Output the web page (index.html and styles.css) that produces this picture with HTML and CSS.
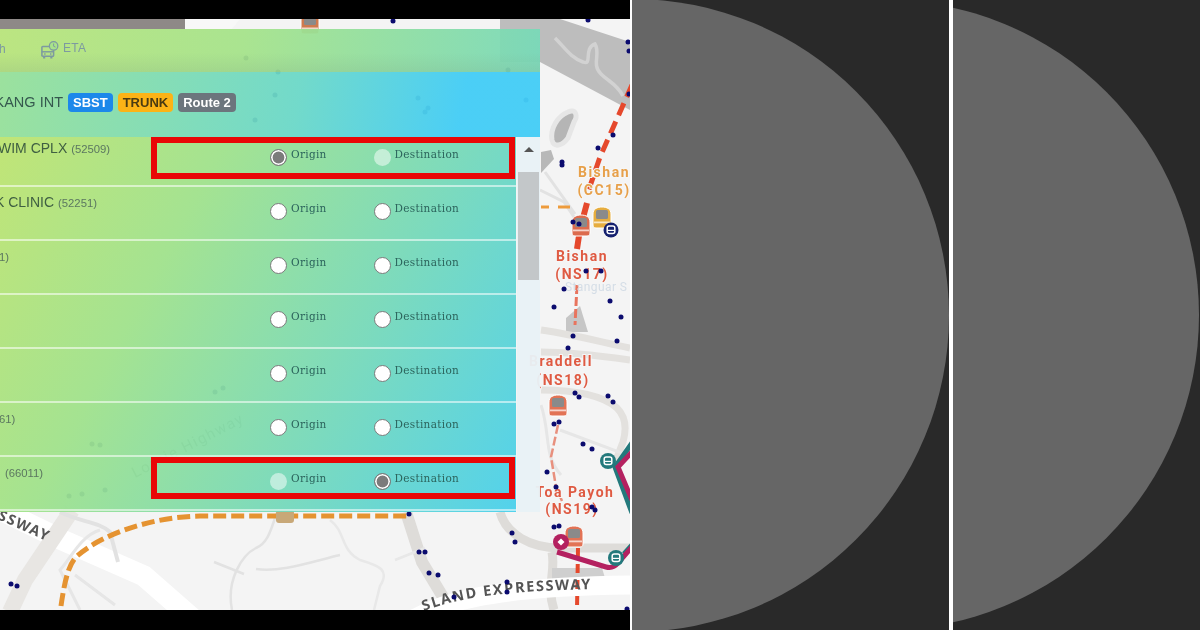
FILE: index.html
```html
<!DOCTYPE html>
<html lang="en">
<head>
<meta charset="utf-8">
<title>Bus route origin and destination</title>
<link rel="stylesheet" href="styles.css">
</head>
<body>
<div class="page">
  <section class="shot">
    <div class="bar-top"></div>
    <div class="map">
      <svg class="map-art" viewBox="0 19 630 591" width="630" height="591" aria-hidden="true">
        <defs>
          <g id="train">
            <path d="M-9 7V-4c0-5 4-7 9-7s9 2 9 7V7c0 2-1 3-3 3H-6c-2 0-3-1-3-3z" fill="currentColor" stroke="#fff" stroke-width="1"/>
            <rect x="-6" y="-8" width="12" height="9" rx="1.5" fill="#8a8a8a"/>
            <rect x="-8" y="3.5" width="16" height="1.8" fill="#fff" opacity=".7"/>
          </g>
          <g id="bus">
            <rect x="-3.8" y="-4" width="7.6" height="7.4" rx="2" fill="none" stroke="#fff" stroke-width="1.5"/>
            <path d="M-3.4 .4H3.4" stroke="#fff" stroke-width="1.2"/>
          </g>
        </defs>

        <rect x="0" y="19" width="185" height="10" fill="#8e8987"/>
        <path d="M185 29l8-6 24 6z" fill="#fff"/>
        <path d="M185 19h55l-8 10h-47z" fill="#f8f8f8"/>
        <path d="M500 19h60l70 23v68l-90-48h-40z" fill="#bdbdbd"/>
        <path d="M555 38c10 10 16 20 28 24 10 4 0-14 12-18 6 10-4 20 6 30 8 8 16 10 22 22" fill="none" stroke="#d2d2d2" stroke-width="3.5"/>
        <path d="M568 112c8-4 10 4 6 10l-6 16c-6 8-14 10-16 2-2-12 6-24 16-28z" fill="#b5b5b5" stroke="#e6e6e6" stroke-width="5"/>
        <path d="M541 152l10-2 3 9-13 14z" fill="#b8b8b8"/>
        <path d="M540 190l24 12 20 30M545 172l30 42" fill="none" stroke="#e2e2e2" stroke-width="3"/>
        <path d="M566 318l14-12 8 26h-22z" fill="#c6c6c6"/>
        <path d="M541 330c30 4 60 12 89 18M541 352c30 0 60 4 89 8" fill="none" stroke="#e3e1de" stroke-width="7"/>
        <path d="M541 390c30 0 60 4 76 18 8 8 10 20 6 34l-10 26" fill="none" stroke="#e3e1de" stroke-width="7"/>
        <path d="M560 430l70 26M541 405c10 30 2 50 20 70" fill="none" stroke="#e6e6e6" stroke-width="3"/>
        <path d="M500 512c6 22 30 36 60 36h70M552 552c4 20-6 34 2 58" fill="none" stroke="#dedcd9" stroke-width="9"/>
        <path d="M552 568l50 0 6 20h-56z" fill="#cfcfcf"/>

        <path d="M-10 505l70 34 84 37 48 42" fill="none" stroke="#fff" stroke-width="21"/>
        <path d="M72 510L25 580 10 612" fill="none" stroke="#e8e6e3" stroke-width="16"/>
        <path d="M60 512c20 10 40 10 50 20l8 30" fill="none" stroke="#e2e2e2" stroke-width="4"/>
        <path d="M100 530c-20 6-30 30-40 40l20 40M75 575l40 30" fill="none" stroke="#e6e6e6" stroke-width="3"/>
        <path d="M232 610c-6-30 10-55 24-62 14-6 16-24 22-38M214 562l30 12M340 555c-26 6-60 18-84 14" fill="none" stroke="#e2e2e2" stroke-width="2.5"/>
        <path d="M406 512l16 50 24 40" fill="none" stroke="#dedcd9" stroke-width="12"/>
        <path d="M330 520c16 12 10 30 30 40 20 6 30 10 20 26l-6 24M395 560l30-12" fill="none" stroke="#e8e8e8" stroke-width="2.5"/>
        <path d="M395 632C430 602 490 586 640 585" fill="none" stroke="#fff" stroke-width="19"/>
        <path id="island" d="M424 611C460 597 510 590 604 589" fill="none"/>

        <path d="M61 606C64 585 68 565 76 557 100 535 150 517 200 516H410" fill="none" stroke="#e59331" stroke-width="5" stroke-dasharray="13 5"/>
        <rect x="276" y="510" width="18" height="13" rx="3" fill="#c8a878"/>

        <path d="M632 85l-32 72-13 38" fill="none" stroke="#e5482c" stroke-width="5" stroke-dasharray="13 7"/>
        <path d="M587 203l-7 26-3 20" fill="none" stroke="#e5482c" stroke-width="6"/>
        <path d="M577 285l-2 40" fill="none" stroke="#e8745e" stroke-width="3" stroke-dasharray="9 3"/>
        <path d="M558 425l-7 32 5 30 6 14" fill="none" stroke="#e8907e" stroke-width="2.5" stroke-dasharray="9 3"/>
        <path d="M578 548l-1 62" fill="none" stroke="#e5482c" stroke-width="4" stroke-dasharray="9 7"/>
        <path d="M541 207h8M558 207h12" stroke="#ed9b3c" stroke-width="3"/>

        <path d="M632 443l-17 24 17 46M632 545l-8 9" fill="none" stroke="#23797c" stroke-width="5"/>
        <path d="M632 452l-14 15 14 33M557 552l49 15q7 2 12-4l14-16" fill="none" stroke="#b42160" stroke-width="5"/>

        <use href="#train" x="581" y="226" color="#dc6b4e"/>
        <use href="#train" x="602" y="218" color="#e6ad3f"/>
        <use href="#train" x="558" y="406" color="#e27355"/>
        <use href="#train" x="574" y="537" color="#e27355"/>
        <use href="#train" x="310" y="24" color="#cf7a4e"/>
        <circle cx="611" cy="230" r="7.5" fill="#15206f"/><use href="#bus" x="611" y="230"/>
        <circle cx="608" cy="461" r="8" fill="#23797c"/><use href="#bus" x="608" y="461"/>
        <circle cx="616" cy="558" r="8" fill="#23797c"/><use href="#bus" x="616" y="558"/>
        <circle cx="561" cy="542" r="8" fill="#b42160"/>
        <path d="M561 538.5l3.5 3.5-3.5 3.5-3.5-3.5z" fill="#fff"/>

        <g class="lbl lbl-orange">
          <text x="604" y="177">Bishan</text>
          <text x="604" y="195">(CC15)</text>
        </g>
        <g class="lbl lbl-red">
          <text x="582" y="261">Bishan</text>
          <text x="582" y="279">(NS17)</text>
          <text x="561" y="366">Braddell</text>
          <text x="563" y="385">(NS18)</text>
          <text x="575" y="497">Toa Payoh</text>
          <text x="572" y="514">(NS19)</text>
        </g>
        <text class="faint-name" x="565" y="291">Stanguar S</text>
        <text class="hwy" transform="translate(-12 515) rotate(24)">ESSWAY</text>
        <text class="hwy"><textPath href="#island" startOffset="0">SLAND EXPRESSWAY</textPath></text>
        <text class="faint-road" transform="translate(135 478) rotate(-27)">Lornie Highway</text>

        <g fill="#0b0b6e">
          <circle cx="393" cy="21" r="2.5"/><circle cx="588" cy="20" r="2.5"/><circle cx="628" cy="42" r="2.5"/><circle cx="629" cy="51" r="2.5"/><circle cx="629" cy="94" r="2.5"/>
          <circle cx="613" cy="135" r="2.5"/><circle cx="598" cy="148" r="2.5"/><circle cx="562" cy="162" r="2.5"/><circle cx="562" cy="165" r="2.5"/><circle cx="573" cy="222" r="2.5"/><circle cx="579" cy="224" r="2.5"/>
          <circle cx="586" cy="271" r="2.5"/><circle cx="601" cy="271" r="2.5"/><circle cx="564" cy="289" r="2.5"/><circle cx="554" cy="307" r="2.5"/><circle cx="610" cy="301" r="2.5"/><circle cx="621" cy="317" r="2.5"/><circle cx="573" cy="336" r="2.5"/><circle cx="617" cy="341" r="2.5"/><circle cx="568" cy="348" r="2.5"/>
          <circle cx="575" cy="393" r="2.5"/><circle cx="579" cy="397" r="2.5"/><circle cx="608" cy="396" r="2.5"/><circle cx="613" cy="402" r="2.5"/><circle cx="554" cy="424" r="2.5"/><circle cx="559" cy="422" r="2.5"/><circle cx="583" cy="444" r="2.5"/><circle cx="592" cy="449" r="2.5"/><circle cx="547" cy="472" r="2.5"/><circle cx="556" cy="487" r="2.5"/><circle cx="592" cy="507" r="2.5"/><circle cx="595" cy="510" r="2.5"/>
          <circle cx="554" cy="527" r="2.5"/><circle cx="559" cy="526" r="2.5"/><circle cx="512" cy="533" r="2.5"/><circle cx="515" cy="542" r="2.5"/><circle cx="507" cy="582" r="2.5"/><circle cx="507" cy="592" r="2.5"/><circle cx="627" cy="609" r="2.5"/>
          <circle cx="11" cy="584" r="2.5"/><circle cx="17" cy="586" r="2.5"/><circle cx="409" cy="514" r="2.5"/><circle cx="419" cy="552" r="2.5"/><circle cx="425" cy="552" r="2.5"/><circle cx="429" cy="573" r="2.5"/><circle cx="438" cy="575" r="2.5"/><circle cx="454" cy="597" r="2.5"/>
          <circle cx="418" cy="98" r="2.5"/><circle cx="428" cy="108" r="2.5"/><circle cx="275" cy="95" r="2.5"/><circle cx="278" cy="72" r="2.5"/><circle cx="255" cy="120" r="2.5"/><circle cx="246" cy="58" r="2.5"/><circle cx="100" cy="445" r="2.5"/><circle cx="92" cy="444" r="2.5"/><circle cx="105" cy="490" r="2.5"/><circle cx="82" cy="494" r="2.5"/><circle cx="69" cy="496" r="2.5"/><circle cx="215" cy="392" r="2.5"/><circle cx="223" cy="388" r="2.5"/><circle cx="425" cy="112" r="2.5"/><circle cx="526" cy="100" r="2.5"/><circle cx="508" cy="70" r="2.5"/>
        </g>
      </svg>

      <div class="panel">
        <nav class="tabs">
          <span class="tab tab-cut">h</span>
          <span class="tab tab-eta">
            <svg class="eta-icon" viewBox="0 0 20 20" width="18" height="18" aria-hidden="true">
              <path d="M2 6h11a1 1 0 0 1 1 1v9a1 1 0 0 1-1 1H2a1 1 0 0 1-1-1V7a1 1 0 0 1 1-1z" fill="none" stroke="currentColor" stroke-width="1.7"/>
              <path d="M1 12h13" stroke="currentColor" stroke-width="1.6"/>
              <path d="M3.5 14.5h1.6M10 14.5h1.6" stroke="currentColor" stroke-width="1.6"/>
              <path d="M3.5 17v2.4M11.5 17v2.4" stroke="currentColor" stroke-width="2.4"/>
              <circle cx="14" cy="5.5" r="4.7" fill="#a8e38a" stroke="currentColor" stroke-width="1.4"/>
              <path d="M14 2.8v3l2.1 1" fill="none" stroke="currentColor" stroke-width="1.1"/>
            </svg>
            ETA
          </span>
        </nav>
        <header class="route-head">
          <span class="route-name">KANG INT</span>
          <span class="badge badge-blue">SBST</span>
          <span class="badge badge-amber">TRUNK</span>
          <span class="badge badge-grey">Route 2</span>
        </header>
        <div class="route-body">
          <div class="stops">
            <div class="row row-first">
              <div class="stop cut-a">WIM CPLX <small>(52509)</small></div>
              <label class="opt"><input class="radio" type="radio" name="o1" checked disabled><span>Origin</span></label>
              <label class="opt"><input class="radio radio-ghost" type="radio" name="d1" disabled><span>Destination</span></label>
              <div class="mark mark-a"></div>
            </div>
            <div class="row">
              <div class="stop cut-b">K CLINIC <small>(52251)</small></div>
              <label class="opt"><input class="radio" type="radio" name="o2" disabled><span>Origin</span></label>
              <label class="opt"><input class="radio" type="radio" name="d2" disabled><span>Destination</span></label>
            </div>
            <div class="row">
              <div class="stop cut-c"><small>1)</small></div>
              <label class="opt"><input class="radio" type="radio" name="o3" disabled><span>Origin</span></label>
              <label class="opt"><input class="radio" type="radio" name="d3" disabled><span>Destination</span></label>
            </div>
            <div class="row">
              <div class="stop"></div>
              <label class="opt"><input class="radio" type="radio" name="o4" disabled><span>Origin</span></label>
              <label class="opt"><input class="radio" type="radio" name="d4" disabled><span>Destination</span></label>
            </div>
            <div class="row">
              <div class="stop"></div>
              <label class="opt"><input class="radio" type="radio" name="o5" disabled><span>Origin</span></label>
              <label class="opt"><input class="radio" type="radio" name="d5" disabled><span>Destination</span></label>
            </div>
            <div class="row">
              <div class="stop cut-d"><small>61)</small></div>
              <label class="opt"><input class="radio" type="radio" name="o6" disabled><span>Origin</span></label>
              <label class="opt"><input class="radio" type="radio" name="d6" disabled><span>Destination</span></label>
            </div>
            <div class="row">
              <div class="stop cut-e"><small>(66011)</small></div>
              <label class="opt"><input class="radio radio-ghost" type="radio" name="o7" disabled><span>Origin</span></label>
              <label class="opt"><input class="radio" type="radio" name="d7" checked disabled><span>Destination</span></label>
              <div class="mark mark-b"></div>
            </div>
          </div>
          <div class="scrollbar">
            <div class="scroll-up"></div>
            <div class="scroll-thumb"></div>
          </div>
        </div>
      </div>
    </div>
    <div class="bar-bottom"></div>
  </section>
  <section class="viewer viewer-a"><div class="disc disc-a"></div></section>
  <section class="viewer viewer-b"><div class="disc disc-b"></div></section>
</div>
</body>
</html>
```
FILE: styles.css
```css
* { box-sizing: border-box; }
html, body { margin: 0; height: 100%; background: #fff; }
body { overflow: hidden; font-family: "Liberation Sans", Arial, sans-serif; }

.page { display: flex; width: 1200px; height: 630px; background: #fff; }

.shot { display: flex; flex-direction: column; width: 630px; flex: none; margin-right: 2px; }
.bar-top { height: 19px; background: #000; position: relative; z-index: 1; }
.bar-bottom { height: 20px; background: #000; position: relative; z-index: 1; }
.map { position: relative; flex: 1; overflow: hidden; background: #f4f4f4; filter: blur(.5px); }
.map-art { display: block; }

.lbl text { font: 700 14px Roboto, "Liberation Sans", sans-serif; letter-spacing: 1.5px; text-anchor: middle; paint-order: stroke; stroke: #f6f6f6; stroke-width: 2px; }
.lbl-orange { fill: #e7a04a; }
.lbl-red { fill: #df5a42; }
.faint-name { font: 12px Roboto, sans-serif; fill: #d4dde6; letter-spacing: .4px; }
.faint-road { font: 15px Roboto, sans-serif; fill: #777; letter-spacing: 1.5px; }
.hwy { font: 700 14.5px "Noto Sans", sans-serif; fill: #555; letter-spacing: 1.6px; }

.panel { position: absolute; top: 10px; left: 0; width: 540px; height: 483px; display: flex; flex-direction: column; }

.tabs {
  display: flex; align-items: center; height: 43px; flex: none; padding-bottom: 5px;
  background:
    linear-gradient(180deg, rgba(120,160,130,0) 55%, rgba(120,160,130,.2) 100%),
    linear-gradient(97deg, rgba(184,228,122,.94) 0%, rgba(165,227,138,.94) 45%, rgba(120,217,185,.94) 100%);
}
.tab { display: flex; align-items: center; font-size: 12px; color: #7d9aa0; }
.tab-cut { width: 42px; margin-left: -1px; padding-top: 1px; }
.tab-eta { gap: 4px; letter-spacing: .3px; }
.eta-icon { margin-top: 3px; }

.route-head {
  display: flex; align-items: center; gap: 5px; height: 65px; flex: none; padding-bottom: 5px;
  background: linear-gradient(100deg, rgba(150,224,152,.94) 0%, rgba(106,216,200,.94) 55%, rgba(68,205,246,.96) 85%, rgba(68,205,246,.96) 100%);
}
.route-name { display: flex; justify-content: flex-end; font-size: 14.5px; color: #35584e; width: 63px; white-space: nowrap; flex: none; }
.badge { display: flex; align-items: center; height: 19px; padding: 0 5px; border-radius: 4px; font-size: 13px; font-weight: 700; white-space: nowrap; }
.badge-blue { background: #1c88ea; color: #fff; }
.badge-amber { background: #fcb316; color: #4a3b12; }
.badge-grey { background: #6c757d; color: #fff; }

.route-body { display: flex; flex: 1; min-height: 0; gap: 1px; }
.stops {
  position: relative; width: 516px; overflow: hidden; flex: none;
  background: linear-gradient(118deg, rgba(190,228,112,.95) 0%, rgba(160,226,140,.95) 32%, rgba(118,217,186,.95) 66%, rgba(74,208,236,.95) 100%);
}
.row { position: relative; display: flex; height: 54px; border-bottom: 2px solid rgba(255,255,255,.55); }
.row-first { margin-top: -4px; }
.stop { width: 270px; flex: none; padding-top: 7px; font-size: 14px; color: #3f5f42; white-space: nowrap; overflow: hidden; }
.stop small { font-size: 11.3px; color: #5b7760; }
.cut-a { text-indent: -2px; }
.cut-b { text-indent: -5px; }
.cut-c { text-indent: -1px; }
.cut-d { text-indent: -1px; }
.cut-e { text-indent: 5px; }

.opt { display: flex; width: 103.5px; flex: none; align-items: flex-start; gap: 4px; padding-top: 16px; font: 10.5px "DejaVu Serif", serif; letter-spacing: .3px; color: #2b635b; }
.opt span { margin-top: -1px; }
.radio { appearance: none; -webkit-appearance: none; width: 17px; height: 17px; margin: 0; flex: none; border-radius: 50%; background: #fff; border: 1.5px solid #7b7b7b; opacity: 1; }
.radio:checked { background: #7b7b7b; box-shadow: inset 0 0 0 1.6px #fff; }
.radio-ghost { background: rgba(255,255,255,.5); border-color: transparent; }

.mark { position: absolute; left: 151px; width: 364px; height: 42px; border: 6px solid #e90707; }
.mark-a { top: 4px; }
.mark-b { top: 0; }

.scrollbar { width: 23px; flex: none; display: flex; flex-direction: column; align-items: center; background: rgba(232,241,246,.96); }
.scroll-up { margin-top: 10px; width: 0; height: 0; border-left: 5px solid transparent; border-right: 5px solid transparent; border-bottom: 5px solid #555; }
.scroll-thumb { width: 21px; height: 108px; margin-top: 20px; background: #c3c7c9; }

.viewer { height: 630px; overflow: hidden; background: #292929; flex: none; }
.viewer-a { width: 317px; margin-right: 4px; }
.viewer-b { width: 247px; }
.disc { border-radius: 50%; background: #666; }
.disc-a { width: 633px; height: 633px; margin: -1.5px 0 0 -316px; }
.disc-b { width: 630px; height: 630px; margin-left: -384px; }
```
